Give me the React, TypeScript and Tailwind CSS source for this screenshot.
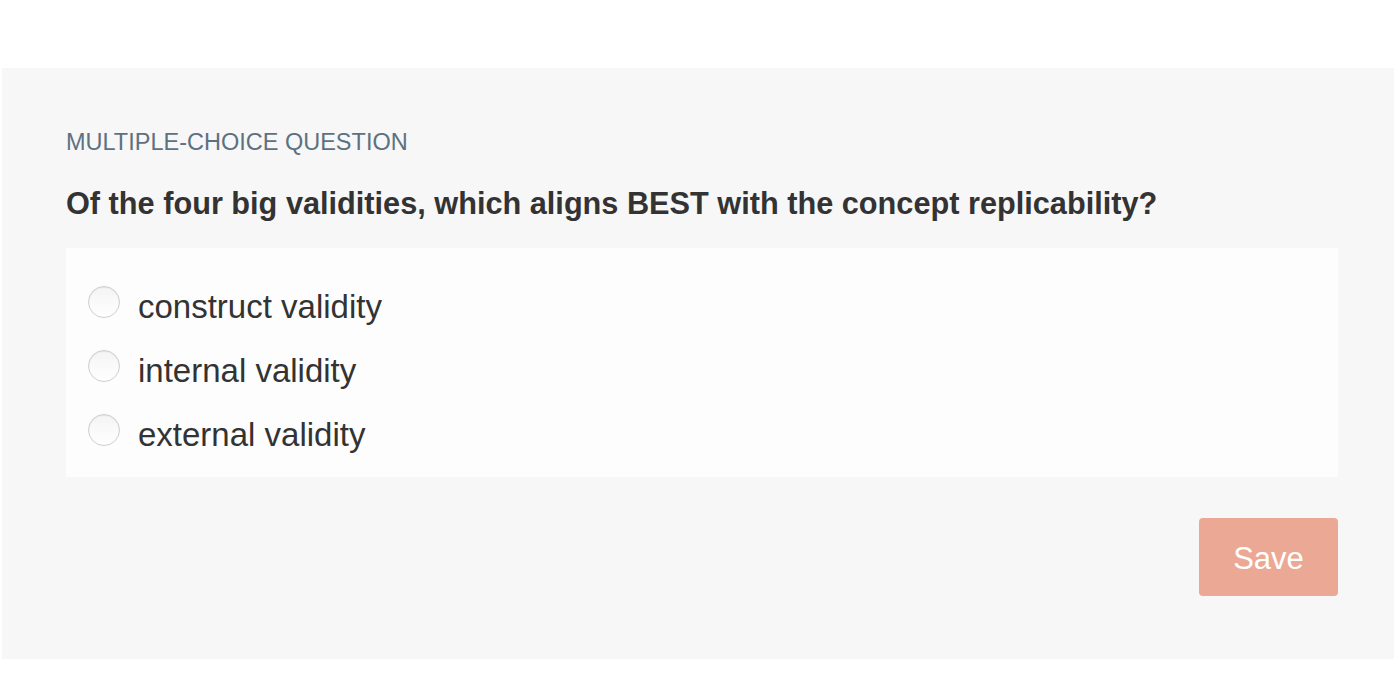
import React from 'react';

const options = ['construct validity', 'internal validity', 'external validity'];

const Radio: React.FC = () => (
  <span className="block w-[32px] h-[32px] shrink-0 rounded-full border border-[#cfcfcf] bg-gradient-to-b from-[#f4f4f4] to-white shadow-[inset_0_1px_1px_rgba(0,0,0,0.06)]" />
);

export default function App() {
  return (
    <div className="min-h-[688px] bg-white pt-[68px] pl-[2px] font-['Liberation_Sans',Arial,sans-serif]">
      <div className="bg-[#f7f7f7] pl-[64px] pr-[56px] pt-[60px] pb-[63px]">
        <div className="text-[23.5px] leading-[28px] text-[#5e7181] uppercase">Multiple-choice question</div>
        <h2 className="mt-[30px] text-[30.7px] leading-[36px] font-bold text-[#333333]">
          Of the four big validities, which aligns BEST with the concept replicability?
        </h2>
        <div className="mt-[26px] bg-[#fdfdfd] pl-[22px] pt-[38px] pb-[23px] flex flex-col gap-[24px]">
          {options.map((o) => (
            <label key={o} className="flex items-start gap-[18px] h-[40px] cursor-pointer">
              <Radio />
              <span className="text-[33px] leading-[40px] text-[#333333] mt-[1px]">{o}</span>
            </label>
          ))}
        </div>
        <div className="mt-[41px] flex justify-end">
          <button className="w-[139px] h-[78px] rounded-[4px] bg-[#eba995] text-white text-[31px] pt-[5px]">Save</button>
        </div>
      </div>
    </div>
  );
}
